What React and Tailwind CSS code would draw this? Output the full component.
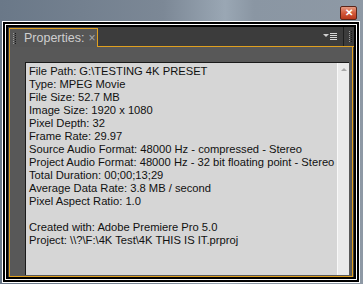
import React from "react";

const lines = [
  "File Path: G:\\TESTING 4K PRESET",
  "Type: MPEG Movie",
  "File Size: 52.7 MB",
  "Image Size: 1920 x 1080",
  "Pixel Depth: 32",
  "Frame Rate: 29.97",
  "Source Audio Format: 48000 Hz - compressed - Stereo",
  "Project Audio Format: 48000 Hz - 32 bit floating point - Stereo",
  "Total Duration: 00;00;13;29",
  "Average Data Rate: 3.8 MB / second",
  "Pixel Aspect Ratio: 1.0",
  "",
  "Created with: Adobe Premiere Pro 5.0",
  "Project: \\\\?\\F:\\4K Test\\4K THIS IS IT.prproj",
];

function Gripper() {
  return (
    <div className="flex flex-col gap-[1px]">
      {[0, 1, 2, 3, 4, 5].map((i) => (
        <div key={i} className="flex gap-[1px]">
          <div className="w-[1px] h-[1px] bg-[#9a9a9a]" />
          <div className="w-[1px] h-[1px] bg-[#1c1c1c]" />
        </div>
      ))}
    </div>
  );
}

export default function App() {
  return (
    <div className="w-[363px] h-[284px] bg-[linear-gradient(90deg,#6a7888_0%,#7c8896_45%,#9aa7b4_62%,#8a96a3_70%,#8e99a5_100%)] pt-[21px] pl-[2px] pr-[3px] pb-[1px] relative font-['Liberation_Sans',sans-serif]">
      {/* close button */}
      <div className="absolute left-[340px] top-[6px] w-[17px] h-[14px] rounded-[2px] border border-[#5a2418] bg-[linear-gradient(180deg,#e39a82_0%,#d35a3c_50%,#b8381c_100%)] flex items-center justify-center text-white text-[10px] font-bold leading-none">
        ✕
      </div>

      <div className="h-full border border-white">
        <div className="h-full border-2 border-black">
          <div className="h-full border border-white">
            <div className="h-full border-2 border-black bg-[#3c3c3c] flex flex-col">
              {/* header */}
              <div className="h-[20px] flex items-end shrink-0">
                <div className="w-[1px]" />
                <div className="h-[19px] w-[89px] border border-b-0 border-[#e0a020] bg-[#565656] flex items-center pl-[3px]">
                  <Gripper />
                  <span className="ml-[8px] text-[12.5px] text-[#cfcfcf] leading-none">
                    Properties:
                  </span>
                  <span className="ml-[4px] text-[12px] text-[#a8a8a8] leading-none">
                    ×
                  </span>
                </div>
                <div className="flex-1 h-full flex items-center justify-end border-b border-[#e0a020] pr-[2px]">
                  <div className="flex items-center mr-[6px]">
                    <div className="w-0 h-0 border-l-[3px] border-r-[3px] border-t-[3px] border-l-transparent border-r-transparent border-t-[#d0d0d0] mt-[-2px]" />
                    <div className="flex flex-col gap-[1px] ml-[1px]">
                      <div className="w-[7px] h-[1px] bg-[#d8d8d8]" />
                      <div className="w-[7px] h-[1px] bg-[#d8d8d8]" />
                      <div className="w-[7px] h-[1px] bg-[#d8d8d8]" />
                      <div className="w-[7px] h-[1px] bg-[#d8d8d8]" />
                    </div>
                  </div>
                  <div className="w-[1px] h-full bg-[#1e1e1e] mr-[5px]" />
                  <Gripper />
                </div>
              </div>

              {/* content */}
              <div className="flex-1 ml-[1px] mr-[1px] border border-t-0 border-[#e0a020] bg-[#585858] pl-[15px] pr-[3px] pt-[15px] pb-[1px] flex">
                <div className="flex-1 flex border-l border-t border-[#1a1a1a] bg-[#d6d6d6]">
                  <div className="flex-1 pl-[3px] pt-[2px] text-[11.2px] leading-[13px] text-[#111]">
                    {lines.map((l, i) => (
                      <div key={i} className="h-[13px] whitespace-nowrap">
                        {l}
                      </div>
                    ))}
                  </div>
                  <div className="w-[12px] bg-[#eaeaea] border-l border-[#f8f8f8] flex justify-center pt-[5px]">
                    <div className="w-0 h-0 border-l-[3px] border-r-[3px] border-b-[3px] border-l-transparent border-r-transparent border-b-[#a8a8a8]" />
                  </div>
                </div>
              </div>
            </div>
          </div>
        </div>
      </div>
    </div>
  );
}
